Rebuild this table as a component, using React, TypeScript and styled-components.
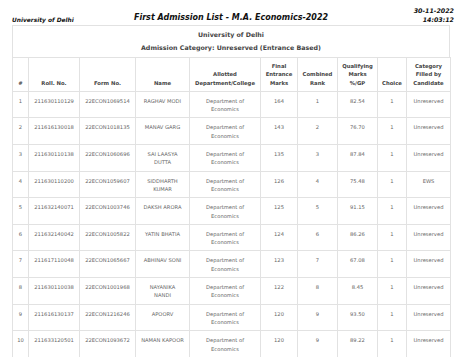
import React from "react";
import styled, { createGlobalStyle } from "styled-components";

const Global = createGlobalStyle`
  html, body { margin: 0; padding: 0; background: #ffffff; }
  body { font-family: "DejaVu Sans", Verdana, sans-serif; }
`;

const Page = styled.div`
  width: 474px;
  height: 357px;
  overflow: hidden;
  padding: 0 20px 0 12px;
  box-sizing: border-box;
`;

const TopBar = styled.div`
  width: 438px;
  height: 25px;
  display: grid;
  grid-template-columns: 1fr auto 1fr;
  align-items: end;
`;

const LeftLabel = styled.div`
  font-size: 5.9px;
  font-weight: bold;
  font-style: italic;
  color: #111;
  padding-bottom: 2px;
`;

const Title = styled.div`
  font-size: 8px;
  font-weight: bold;
  font-style: italic;
  color: #111;
  padding-bottom: 3px;
`;

const DateBox = styled.div`
  justify-self: end;
  text-align: right;
  font-size: 6.3px;
  line-height: 9px;
  font-weight: bold;
  font-style: italic;
  color: #111;
  margin-right: -4px;
  padding-bottom: 1px;
`;

const Box = styled.div`
  width: 438px;
  box-sizing: border-box;
  border: 1px solid #e2e2e2;
  border-bottom: none;
  padding: 3px 0 3px;
  text-align: center;
  font-size: 6.3px;
  line-height: 12.5px;
  font-weight: bold;
  color: #444;
`;

const Table = styled.table`
  width: 438px;
  border-collapse: collapse;
  table-layout: fixed;
`;

const Th = styled.th`
  border: 1px solid #e2e2e2;
  font-size: 5.3px;
  line-height: 8.3px;
  font-weight: bold;
  color: #444;
  text-align: center;
  vertical-align: bottom;
  padding: 4px 1px 4px;
`;

const Td = styled.td`
  border: 1px solid #e2e2e2;
  font-size: 5.2px;
  line-height: 8.3px;
  color: #666;
  text-align: center;
  vertical-align: top;
  padding: 5px 1px 4px;
  height: 16.6px;
`;

type Row = {
  n: number;
  roll: string;
  form: string;
  name: string[];
  marks: number;
  rank: number;
  qual: string;
  cat: string;
};

const rows: Row[] = [
  { n: 1, roll: "211630110129", form: "22ECON1069514", name: ["RAGHAV MODI"], marks: 164, rank: 1, qual: "82.54", cat: "Unreserved" },
  { n: 2, roll: "211616130018", form: "22ECON1018135", name: ["MANAV GARG"], marks: 143, rank: 2, qual: "76.70", cat: "Unreserved" },
  { n: 3, roll: "211630110138", form: "22ECON1060696", name: ["SAI LAASYA", "DUTTA"], marks: 135, rank: 3, qual: "87.84", cat: "Unreserved" },
  { n: 4, roll: "211630110200", form: "22ECON1059607", name: ["SIDDHARTH", "KUMAR"], marks: 126, rank: 4, qual: "75.48", cat: "EWS" },
  { n: 5, roll: "211632140071", form: "22ECON1003746", name: ["DAKSH ARORA"], marks: 125, rank: 5, qual: "91.15", cat: "Unreserved" },
  { n: 6, roll: "211632140042", form: "22ECON1005822", name: ["YATIN BHATIA"], marks: 124, rank: 6, qual: "86.26", cat: "Unreserved" },
  { n: 7, roll: "211617110048", form: "22ECON1065667", name: ["ABHINAV SONI"], marks: 123, rank: 7, qual: "67.08", cat: "Unreserved" },
  { n: 8, roll: "211630110038", form: "22ECON1001968", name: ["NAYANIKA", "NANDI"], marks: 122, rank: 8, qual: "8.45", cat: "Unreserved" },
  { n: 9, roll: "211616130137", form: "22ECON1216246", name: ["APOORV"], marks: 120, rank: 9, qual: "93.50", cat: "Unreserved" },
  { n: 10, roll: "211633120501", form: "22ECON1093672", name: ["NAMAN KAPOOR"], marks: 120, rank: 9, qual: "89.22", cat: "Unreserved" },
];

const widths = [16, 51, 56, 54, 71, 37, 40, 40, 29, 44];

const Lines: React.FC<{ lines: string[] }> = ({ lines }) => (
  <>
    {lines.map((l, i) => (
      <React.Fragment key={i}>
        {i > 0 && <br />}
        {l}
      </React.Fragment>
    ))}
  </>
);

export default function App() {
  return (
    <>
      <Global />
      <Page>
        <TopBar>
          <LeftLabel>University of Delhi</LeftLabel>
          <Title>First Admission List - M.A. Economics-2022</Title>
          <DateBox>
            30-11-2022
            <br />
            14:03:12
          </DateBox>
        </TopBar>
        <Box>
          University of Delhi
          <br />
          Admission Category: Unreserved (Entrance Based)
        </Box>
        <Table>
          <colgroup>
            {widths.map((w, i) => (
              <col key={i} style={{ width: `${w}px` }} />
            ))}
          </colgroup>
          <thead>
            <tr>
              <Th>#</Th>
              <Th>Roll. No.</Th>
              <Th>Form No.</Th>
              <Th>Name</Th>
              <Th>
                <Lines lines={["Allotted", "Department/College"]} />
              </Th>
              <Th>
                <Lines lines={["Final", "Entrance", "Marks"]} />
              </Th>
              <Th>
                <Lines lines={["Combined", "Rank"]} />
              </Th>
              <Th>
                <Lines lines={["Qualifying", "Marks", "%/GP"]} />
              </Th>
              <Th>Choice</Th>
              <Th>
                <Lines lines={["Category", "Filled by", "Candidate"]} />
              </Th>
            </tr>
          </thead>
          <tbody>
            {rows.map((r) => (
              <tr key={r.n}>
                <Td>{r.n}</Td>
                <Td>{r.roll}</Td>
                <Td>{r.form}</Td>
                <Td>
                  <Lines lines={r.name} />
                </Td>
                <Td>
                  <Lines lines={["Department of", "Economics"]} />
                </Td>
                <Td>{r.marks}</Td>
                <Td>{r.rank}</Td>
                <Td>{r.qual}</Td>
                <Td>1</Td>
                <Td>{r.cat}</Td>
              </tr>
            ))}
          </tbody>
        </Table>
      </Page>
    </>
  );
}
